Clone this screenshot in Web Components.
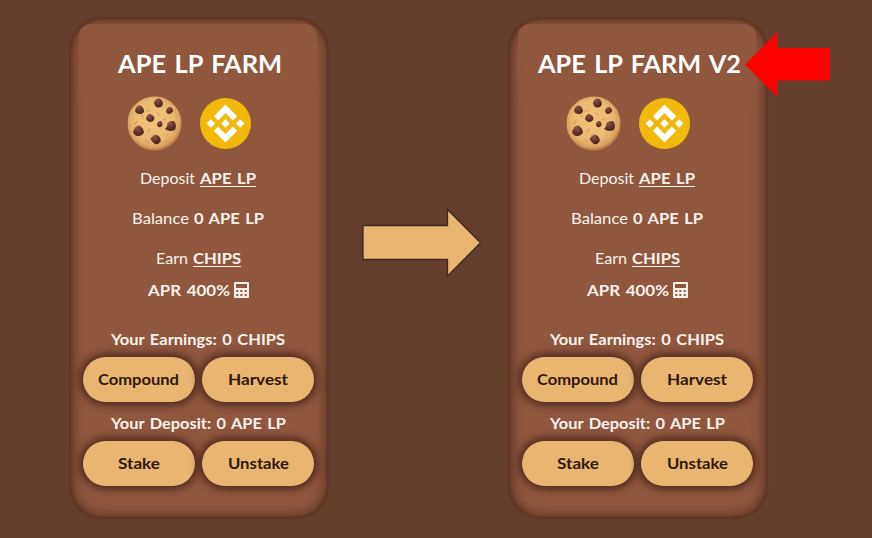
<!DOCTYPE html>
<html lang="en"><head><meta charset="utf-8"><title>Farm migration</title>
<style>html,body{margin:0;height:538px;overflow:hidden;background:#643d2c}</style></head><body>
<farm-page></farm-page>
<script>
const define=(name,html,init)=>{
  const t=document.createElement('template');t.innerHTML=html;
  customElements.define(name,class extends HTMLElement{
    connectedCallback(){ if(this.shadowRoot)return;
      this.attachShadow({mode:'open'}).append(t.content.cloneNode(true)); if(init)init(this,this.shadowRoot);}
  });
};
/* Text stretched evenly to a given width */
define('fit-text',`<style>:host{display:inline-block;white-space:pre;text-align:left}span{display:inline-block;transform-origin:0 50%;word-spacing:.09em}:host([u]) span{text-decoration:underline;text-decoration-thickness:1px;text-underline-offset:1.500px;text-decoration-skip-ink:none}</style><span><slot></slot></span>`,(el,root)=>{
  const s=root.querySelector('span'),w=+el.getAttribute('w');
  const k=w/s.getBoundingClientRect().width; el.style.width=w+'px'; s.style.transform='scaleX('+k+')';
});
define('cookie-icon',`<style>:host{display:block;width:55px;height:55px}svg{display:block}</style>
<svg width="55" height="55" viewBox="0 0 55 55"><defs><radialGradient id="g" cx=".48" cy=".45" r=".54"><stop offset="0" stop-color="#f5c47c"/><stop offset=".7" stop-color="#ebb871"/><stop offset=".9" stop-color="#dba160"/><stop offset="1" stop-color="#b87a48"/></radialGradient>
<radialGradient id="c" cx=".4" cy=".25" r=".75"><stop offset="0" stop-color="#8d5444"/><stop offset=".45" stop-color="#6d392e"/><stop offset="1" stop-color="#47231e"/></radialGradient></defs>
<path d="M27 .5C34 0 42 3 47 9c5 5 8 12 7.500 19C54 36 52 42 46 47c-5 5-12 8-19 7.500C19 54 13 52 8 46 3 41 .5 35 .8 27 1 19 3 13 9 8 14 3 20 1 27 .5z" fill="url(#g)"/>
<g stroke="#cf9857" stroke-width="1.500" stroke-linecap="round" opacity=".65"><path d="M22 14l-3 2M30 17l2 2M10 25l-2 3M23 33l-2 3M36 24l2-1M19 44l3 2M38 46l3-2M47 36l2-3M28 38l-3 2M14 19l2 2M40 40l1-2"/></g>
<g fill="url(#c)"><path d="M27 7q1-4.500 5-4.500 3.500 1 4 5.500-1 3.500-4.500 3.500-3 .5-4.500-4.500z"/><path d="M8 15q1-5.500 5-5.500 3.500 1 4 5.500 0 3-4.500 3-3 .5-4.500-3z"/><path d="M39 15q1-4 4-4 3.500 1.500 3 4.500-2 2.500-4.500 2.500-2-.5-2.500-3z"/><path d="M19 23q1-5 4-5 4 1 4.500 4.500-1 3.500-4.500 3.500-2.500 0-4-3z"/><path d="M30 28q1-3.500 4-3 2 2 1.500 4.500-2 2.500-4 1.500-1.500-1-1.500-3z"/><path d="M38 33q3-3 2.500-6 4-3 7-1.500 2.500 4.500 .5 8-4.500 3-10-.5z"/><path d="M6 36q2-6.500 6-6.500 4.500 2 5 7-2.500 4-7 3.500-3-1-4-4z"/><path d="M23.500 43q3-4.500 6.500-4 4.500 2 3.500 6.500-2.500 3.500-5.500 2.500-3-2-4.500-5z"/></g></svg>`);
define('coin-icon',`<style>:host{display:block;width:51px;height:51px}svg{display:block}</style>
<svg width="51" height="51" viewBox="0 0 32 32"><circle cx="16" cy="16" r="16" fill="#f0b90b"/><path fill="#fff" transform="translate(16 16) scale(1.190) translate(-16 -16)" d="M12.116 14.404L16 10.520l3.886 3.886 2.260-2.260L16 6l-6.144 6.144 2.260 2.260zM6 16l2.260-2.260L10.520 16l-2.260 2.260L6 16zm6.116 1.596L16 21.480l3.886-3.886 2.260 2.259L16 26l-6.144-6.144 2.260-2.260zM21.480 16l2.260-2.260L26 16l-2.260 2.260L21.480 16zM18.292 16L16 18.294 13.706 16 16 13.706 18.292 16z"/></svg>`);
define('calculator-icon',`<style>:host{display:block;width:15px;height:16px}svg{display:block}</style>
<svg width="15" height="16" viewBox="0 0 15 16"><path fill="#f8eeea" fill-rule="evenodd" d="M1 0h13Q15 0 15 1v14q0 1-1 1H1Q0 16 0 15V1Q0 0 1 0zM2 2v4h11V2zM2.300 8v2h2V8zM6.300 8v2h2V8zM10.700 8v2h2V8zM2.300 12v2h2v-2zM6.300 12v2h2v-2zM10.700 12v2h2v-2z"/></svg>`);
define('pill-button',`<style>:host{display:flex;box-sizing:border-box;width:112px;height:45px;padding-bottom:1.500px;align-items:center;justify-content:center;border-radius:23px;background:#eab571;color:#301710;box-shadow:0 0 8px 3px #4b261b;font-weight:700}</style><slot></slot>`);
define('text-row',`<style>:host{display:flex;height:24px;line-height:24px;justify-content:center;align-items:baseline;gap:5px;white-space:nowrap}</style><slot></slot>`);
define('button-row',`<style>:host{display:flex;gap:7.500px;justify-content:center;height:45px}</style><slot></slot>`);
define('farm-card',`<style>
:host{display:block;box-sizing:border-box;width:258px;height:500px;border-radius:32px;background:#91573d;box-shadow:inset 0 0 14px 1px #4b271b,inset 0 0 3px #4b271b,0 0 2px #4d291d;padding:6px 10px 0;color:#fbf2ee;font:15.700px/24px Lato,sans-serif}
.body{height:477px;border-radius:12px;background:linear-gradient(#91573d 0 20px,#91573d00 90px);display:flex;flex-direction:column;padding-top:23.600px;box-sizing:border-box;margin:0 1px 0 -1px}
h2{font:700 25.200px/32px Lato,sans-serif;margin:0 -10px;padding-left:4px;color:#fff;text-align:center;height:32px;white-space:nowrap}
.icons{display:flex;gap:18px;align-items:center;justify-content:center;height:55px;margin:17px 17.500px 15.200px 0}
text-row{margin-left:.5px}
b{font-weight:700}.bal,.earn{margin-top:16px}.apr{margin-top:8px}.apr calculator-icon{align-self:center;margin-left:-1px}.earnings{margin-top:25.200px;margin-bottom:6px}.dep{margin-top:8.500px;margin-bottom:6.500px}
.strong{font-weight:700}button-row{margin-left:1px}
</style><div class="body"><h2><slot></slot></h2>
<div class="icons"><cookie-icon></cookie-icon><coin-icon></coin-icon></div>
<text-row><fit-text w="55">Deposit</fit-text><b><fit-text u w="56">APE LP</fit-text></b></text-row>
<text-row class="bal"><fit-text w="57">Balance</fit-text><b><fit-text w="70">0 APE LP</fit-text></b></text-row>
<text-row class="earn"><fit-text w="32">Earn</fit-text><b><fit-text u w="48">CHIPS</fit-text></b></text-row>
<text-row class="apr strong"><fit-text w="82">APR 400%</fit-text><calculator-icon></calculator-icon></text-row>
<text-row class="earnings strong"><fit-text w="174">Your Earnings: 0 CHIPS</fit-text></text-row>
<button-row><pill-button><fit-text w="81">Compound</fit-text></pill-button><pill-button><fit-text w="60">Harvest</fit-text></pill-button></button-row>
<text-row class="dep strong"><fit-text w="175">Your Deposit: 0 APE LP</fit-text></text-row>
<button-row><pill-button><fit-text w="42">Stake</fit-text></pill-button><pill-button><fit-text w="61">Unstake</fit-text></pill-button></button-row>
</div>`);
define('flow-arrow',`<style>:host{display:block;width:120px;height:70px}svg{display:block}</style><svg width="120" height="70"><path d="M1 17.500H85.500V1.500L118.500 34.700 85.500 68V51.500H1z" fill="#eab571" stroke="#3c2a20" stroke-width="1.300"/></svg>`);
define('pointer-arrow',`<style>:host{display:block;width:85px;height:65px}svg{display:block}</style><svg width="85" height="65"><path d="M0 32.500L32.500 0V16H85V48.500H32.500V65z" fill="#f00"/></svg>`);
define('farm-page',`<style>:host{display:flex;box-sizing:border-box;width:872px;height:538px;padding:17.500px 0 0 70px;position:relative;background:#643d2c}
flow-arrow{margin:190.500px 27px 0 34px}pointer-arrow{position:absolute;left:745px;top:31.500px}</style>
<farm-card><fit-text w="164">APE LP FARM</fit-text></farm-card><flow-arrow></flow-arrow><farm-card><fit-text w="203">APE LP FARM V2</fit-text></farm-card><pointer-arrow></pointer-arrow>`);
</script></body></html>
